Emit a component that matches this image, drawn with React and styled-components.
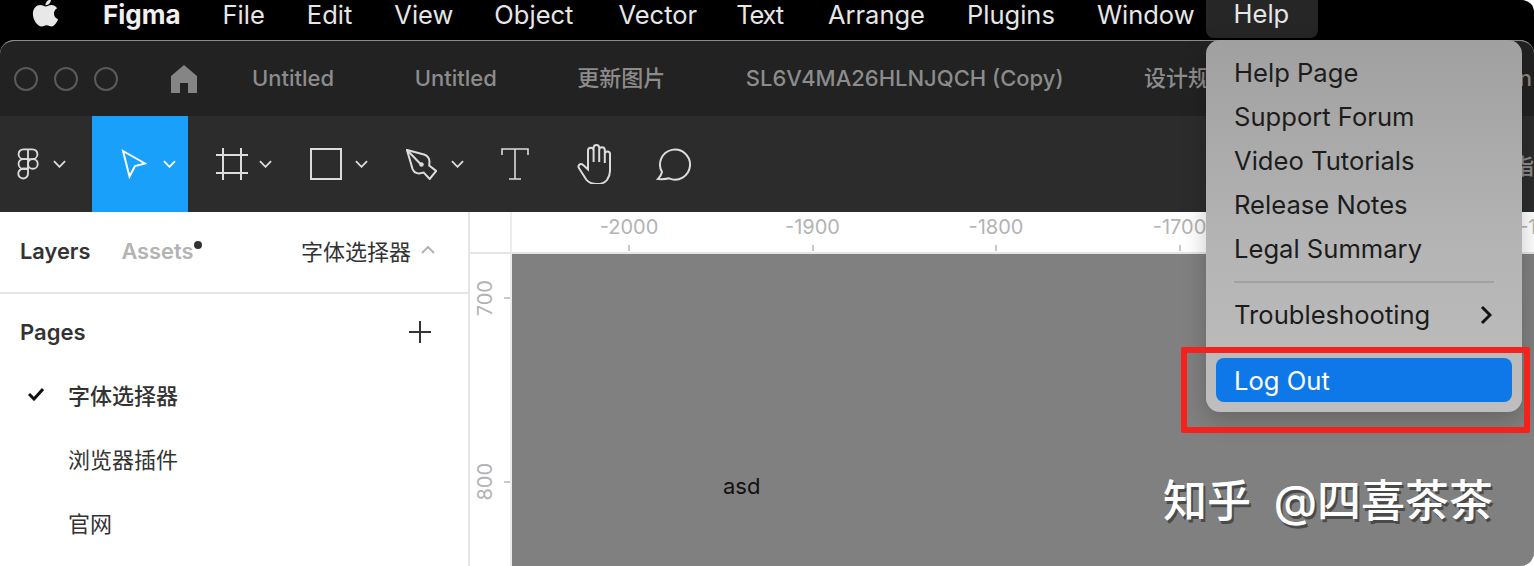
import React from "react";
import styled, { createGlobalStyle } from "styled-components";

const CJK = `"Inter", "Noto Sans CJK SC", sans-serif`;

const Global = createGlobalStyle`
  html, body { margin: 0; padding: 0; background: #fff; overflow: hidden; }
  body { font-family: ${CJK}; }
`;

const Screen = styled.div`
  position: relative;
  width: 1534px;
  height: 566px;
  overflow: hidden;
  background: #000;
  border-radius: 0 12px 14px 0;
  display: flex;
  flex-direction: column;
`;

const MenuBar = styled.div`
  height: 40px;
  flex: none;
  display: flex;
  align-items: center;
  padding-left: 32px;
  color: #ececec;
  font-size: 25.5px;
  line-height: 30px;
`;

const AppleMark = styled.svg`
  width: 27px;
  height: 30px;
  margin: -14px 44px 0 0;
  flex: none;
`;

const MenuName = styled.span`
  flex: none;
  margin-right: ${p => p.$gap ?? 42}px;
  margin-top: -10px;
  font-size: ${p => (p.$bold ? 26 : 25.5)}px;
  font-weight: ${p => (p.$bold ? 700 : 400)};
  letter-spacing: ${p => p.$track ?? 0}px;
  color: ${p => (p.$bold ? "#f0f0f0" : "#e6e6e6")};
`;

const HelpName = styled.span`
  flex: none;
  width: 112px;
  height: 38px;
  margin-bottom: 2px;
  padding-left: 28px;
  box-sizing: border-box;
  background: #262626;
  border-radius: 0 0 8px 8px;
  color: #e6e6e6;
  line-height: 28px;
`;

const Win = styled.div`
  flex: 1;
  display: flex;
  flex-direction: column;
  border-top: 1px solid #8c8c8c;
  border-radius: 14px 14px 0 0;
  overflow: hidden;
  background: #fff;
  min-height: 0;
`;

const TabBar = styled.div`
  height: 75px;
  flex: none;
  background: #222222;
  display: flex;
  align-items: center;
  padding-left: 14px;
  overflow: hidden;
  white-space: nowrap;
`;

const Lights = styled.div`
  display: flex;
  gap: 16px;
  margin-right: 53px;
  flex: none;
`;

const Light = styled.span`
  width: 24px;
  height: 24px;
  border: 2px solid #5a5a5a;
  box-sizing: border-box;
  border-radius: 50%;
`;

const HomeIcon = styled.svg`
  width: 26px;
  height: 28px;
  margin-right: 55px;
  flex: none;
`;

const Tab = styled.span`
  flex: none;
  margin-right: ${p => (p.$end ? 2 : 80.5)}px;
  margin-left: ${p => (p.$end ? "auto" : 0)};
  margin-top: ${p => (p.$cjk ? -6 : -2)}px;
  color: #8c8c8c;
  font-size: 22px;
  font-weight: 500;
`;

const Toolbar = styled.div`
  height: 96px;
  flex: none;
  background: #2c2c2c;
  display: flex;
  align-items: stretch;
  position: relative;
`;

const MainTool = styled.div`
  width: ${p => p.$width ?? 96}px;
  flex: none;
  display: flex;
  align-items: center;
  justify-content: flex-end;
  gap: ${p => p.$gap ?? 11}px;
  padding-right: ${p => p.$pad ?? 12}px;
  box-sizing: border-box;
  background: ${p => (p.$active ? "#18a0fb" : "transparent")};
  color: ${p => (p.$active ? "#ffffff" : "#dcdcdc")};
`;

const SimpleTool = styled.div`
  width: 80px;
  flex: none;
  display: flex;
  align-items: center;
  justify-content: center;
  color: #dcdcdc;
  margin-left: ${p => p.$shift ?? 0}px;
`;

const ToolbarEdge = styled.span`
  margin-left: auto;
  align-self: center;
  color: #8c8c8c;
  font-size: 22px;
  font-weight: 500;
`;

const Chevron = styled.svg`
  width: 13px;
  height: 8px;
  flex: none;
`;

const Body = styled.div`
  flex: 1;
  display: flex;
  min-height: 0;
`;

const Sidebar = styled.aside`
  width: 470px;
  flex: none;
  box-sizing: border-box;
  border-right: 2px solid #e5e5e5;
  background: #fff;
  display: flex;
  flex-direction: column;
`;

const SideTabs = styled.div`
  height: 82px;
  flex: none;
  box-sizing: border-box;
  border-bottom: 2px solid #e5e5e5;
  display: flex;
  align-items: center;
  padding: 0 33px 2px 20px;
  font-size: 21.8px;
  font-weight: 600;
`;

const SideTab = styled.span`
  color: ${p => (p.$muted ? "#b3b3b3" : "#333333")};
  margin-right: ${p => p.$gap ?? 0}px;
  position: relative;
`;

const Dot = styled.i`
  position: absolute;
  right: -9px;
  top: 3px;
  width: 8px;
  height: 8px;
  border-radius: 50%;
  background: #333;
`;

const PagePicker = styled.span`
  margin-left: auto;
  margin-top: -2px;
  display: flex;
  align-items: center;
  gap: 10px;
  color: #333;
  font-weight: 400;
  font-size: 22px;
`;

const PagesHead = styled.div`
  height: 68px;
  flex: none;
  box-sizing: border-box;
  display: flex;
  align-items: center;
  justify-content: space-between;
  padding: 8px 37px 0 20px;
  font-size: 22px;
  font-weight: 600;
  color: #333;
`;

const PageList = styled.div`
  display: flex;
  flex-direction: column;
`;

const PageRow = styled.div`
  height: 64px;
  flex: none;
  display: flex;
  align-items: center;
  padding-left: 28px;
  font-size: 22px;
  font-weight: ${p => (p.$active ? 500 : 400)};
  color: #333;
`;

const CheckSlot = styled.span`
  width: 40px;
  display: flex;
  flex: none;
`;

const Stage = styled.div`
  flex: 1;
  display: grid;
  grid-template-columns: 42px 1fr;
  grid-template-rows: 42px 1fr;
  min-width: 0;
`;

const Corner = styled.div`
  background: #fff;
  border-bottom: 2px solid #e5e5e5;
  border-right: 2px solid #ececec;
  box-sizing: border-box;
`;

const HRuler = styled.div`
  background: #fff;
  border-bottom: 2px solid #e5e5e5;
  box-sizing: border-box;
  display: flex;
  padding-left: 25.25px;
  overflow: hidden;
`;

const HMark = styled.div`
  width: 183.5px;
  flex: none;
  display: flex;
  flex-direction: column;
  align-items: center;
  justify-content: flex-end;
  color: #b3b3b3;
  font-size: 20px;
  line-height: 24px;
  gap: 6px;
  padding-bottom: 1px;
`;

const HTick = styled.i`
  width: 2px;
  height: 6px;
  background: #c8c8c8;
`;

const VRuler = styled.div`
  background: #fff;
  border-right: 2px solid #ececec;
  box-sizing: border-box;
  display: flex;
  flex-direction: column;
  overflow: hidden;
`;

const VMark = styled.div`
  height: 184px;
  flex: none;
  display: flex;
  align-items: center;
  justify-content: flex-end;
  gap: 7px;
  margin-top: ${p => (p.$first ? "-48px" : 0)};
  color: #b3b3b3;
  font-size: 20px;
`;

const VLabel = styled.span`
  writing-mode: vertical-rl;
  transform: rotate(180deg);
  line-height: 24px;
`;

const VTick = styled.i`
  width: 6px;
  height: 2px;
  background: #c8c8c8;
  flex: none;
`;

const Canvas = styled.div`
  background: #808080;
  padding: 217px 0 0 211px;
  font-size: 22px;
  line-height: 30px;
  color: #111;
`;

const HelpMenu = styled.div`
  position: absolute;
  left: 1206px;
  top: 40px;
  width: 316px;
  height: 372px;
  box-sizing: border-box;
  padding: 11px 10px 10px;
  border-radius: 14px;
  background: linear-gradient(180deg, #a0a0a0 0%, #b4b4b4 55%, #bebebe 100%);
  box-shadow: 0 8px 24px rgba(0, 0, 0, 0.22);
  display: flex;
  flex-direction: column;
  color: #1c1c1c;
  font-size: 25.6px;
`;

const HelpItem = styled.div`
  height: 44px;
  flex: none;
  box-sizing: border-box;
  display: flex;
  align-items: center;
  justify-content: space-between;
  padding: ${p => (p.$active ? 2 : 0)}px 20px 0 18px;
  border-radius: 8px;
  line-height: 30px;
  background: ${p => (p.$active ? "#0f78e8" : "transparent")};
  color: ${p => (p.$active ? "#ffffff" : "#1c1c1c")};
`;

const HelpRule = styled.div`
  height: 2px;
  flex: none;
  margin: ${p => p.$m};
  background: #a2a2a2;
`;

const RedMark = styled.div`
  position: absolute;
  left: 1181px;
  top: 347px;
  width: 349px;
  height: 86px;
  box-sizing: border-box;
  border: 6px solid #f5221b;
  border-radius: 2px;
  pointer-events: none;
`;

const Watermark = styled.div`
  position: absolute;
  left: 1163px;
  top: 471px;
  font-size: 44px;
  line-height: 60px;
  font-weight: 500;
  word-spacing: 11px;
  color: #ffffff;
  white-space: nowrap;
  text-shadow: 2px 3px 0 #4a4a4a;
`;

const Chev = () => (
  <Chevron viewBox="0 0 14 8" fill="none" stroke="currentColor" strokeWidth="2">
    <path d="M1 1l6 6 6-6" />
  </Chevron>
);

const stroke = { fill: "none", stroke: "currentColor", strokeWidth: 2 };

export default function App() {
  return (
    <>
      <Global />
      <Screen>
        <MenuBar>
          <AppleMark viewBox="0 0 30 32">
            <path
              fill="#e8e8e8"
              d="M21 1c.3 3-2.600 6.600-6 6.300C14.600 4 18 1 21 1zM15.300 8.900c1.500 0 3.300-1.700 6.300-1.700 2.300 0 4.700 1.100 6.300 3.400-5.300 3.200-4.400 10.300 1.100 12.400-1.500 3.500-4.300 8-7.100 8-2.200 0-3-1.400-5.600-1.400-2.700 0-3.500 1.400-5.600 1.400C6.700 31 1 24 1 17c0-6.500 4.200-9.800 8.200-9.800 2.700 0 4.800 1.700 6.100 1.700z"
            />
          </AppleMark>
          <MenuName $bold>Figma</MenuName>
          <MenuName>File</MenuName>
          <MenuName>Edit</MenuName>
          <MenuName $gap={41}>View</MenuName>
          <MenuName $gap={45}>Object</MenuName>
          <MenuName $gap={39}>Vector</MenuName>
          <MenuName $gap={45} $track={-1.2}>Text</MenuName>
          <MenuName>Arrange</MenuName>
          <MenuName>Plugins</MenuName>
          <MenuName $gap={11}>Window</MenuName>
          <HelpName>Help</HelpName>
        </MenuBar>
        <Win>
          <TabBar>
            <Lights>
              <Light />
              <Light />
              <Light />
            </Lights>
            <HomeIcon viewBox="0 0 26 28">
              <path fill="#858585" d="M13 0L0 11v17h9V18h8v10h9V11z" />
            </HomeIcon>
            <Tab>Untitled</Tab>
            <Tab>Untitled</Tab>
            <Tab $cjk>更新图片</Tab>
            <Tab>SL6V4MA26HLNJQCH (Copy)</Tab>
            <Tab $cjk>设计规范</Tab>
            <Tab $end>n</Tab>
          </TabBar>
          <Toolbar>
            <MainTool $width={92} $pad={26} $gap={14}>
              <svg width="22" height="32" viewBox="0 0 24 34" {...stroke}>
                <path d="M12 1H7a5 5 0 0 0 0 10.600h5zM12 1h5a5 5 0 0 1 0 10.600h-5z" />
                <path d="M12 11.600H7a5 5 0 0 0 0 10.600h5z" />
                <circle cx="17.300" cy="16.900" r="5.300" />
                <path d="M12 22.200H7a5.300 5.300 0 1 0 5 5.300z" />
              </svg>
              <Chev />
            </MainTool>
            <MainTool $active $gap={16}>
              <svg width="26" height="30" viewBox="0 0 26 30" {...stroke} strokeLinejoin="miter">
                <path d="M2 2l22 12.500-10 2.500-5.500 10.500z" />
              </svg>
              <Chev />
            </MainTool>
            <MainTool>
              <svg width="32" height="32" viewBox="0 0 32 32" {...stroke}>
                <path d="M7 0v32M25 0v32M0 7h32M0 25h32" />
              </svg>
              <Chev />
            </MainTool>
            <MainTool $gap={13}>
              <svg width="32" height="32" viewBox="0 0 32 32" {...stroke}>
                <rect x="1" y="1" width="30" height="30" />
              </svg>
              <Chev />
            </MainTool>
            <MainTool $gap={14}>
              <svg width="31" height="31" viewBox="0 0 31 31" {...stroke}>
                <path d="M1 1l17 4.500c3.500 1.200 5.500 3.800 5.500 7.500l-.3 3.500 7 5.500-6.500 8-6-6.500-3.500.8c-3.200.4-6.300-1.300-7.700-4.500z" />
                <path d="M1 1l13.500 14" />
                <circle cx="15.500" cy="15.500" r="2.200" fill="currentColor" stroke="none" />
              </svg>
              <Chev />
            </MainTool>
            <SimpleTool $shift={-1}>
              <svg width="28" height="32" viewBox="0 0 28 32" fill="none" stroke="currentColor" strokeWidth="1.600">
                <path d="M1 7V1h26v6M14 1v30M8 31h12" />
              </svg>
            </SimpleTool>
            <SimpleTool $shift={-1}>
              <svg width="36" height="40" viewBox="0 0 36 40" {...stroke}>
                <path d="M31 36c2-3 3-5 3-9V10a2.600 2.600 0 0 0-5.200 0v9V6a2.800 2.800 0 0 0-5.600 0v12V3.800a2.800 2.800 0 0 0-5.600 0V18V6.500a2.800 2.800 0 0 0-5.600 0v19l-4.800-4.500c-3-2.500-6 .5-4 3.500l7 11c3 4 6.500 4.500 10.500 4.500 5 0 8-1 10.300-4z" />
              </svg>
            </SimpleTool>
            <SimpleTool>
              <svg width="36" height="33" viewBox="0 0 36 33" {...stroke}>
                <path d="M2 31c2-2 3.500-4.800 4-7A15 15 0 1 1 13 30.300c-3.500 1-7 1-11 .7z" />
              </svg>
            </SimpleTool>
            <ToolbarEdge>指</ToolbarEdge>
          </Toolbar>
          <Body>
            <Sidebar>
              <SideTabs>
                <SideTab $gap={31}>Layers</SideTab>
                <SideTab $muted>
                  Assets
                  <Dot />
                </SideTab>
                <PagePicker>
                  字体选择器
                  <svg width="14" height="8" viewBox="0 0 14 8" fill="none" stroke="#b3b3b3" strokeWidth="2">
                    <path d="M1 7l6-6 6 6" />
                  </svg>
                </PagePicker>
              </SideTabs>
              <PagesHead>
                Pages
                <svg width="22" height="22" viewBox="0 0 22 22" stroke="#333" strokeWidth="2">
                  <path d="M11 0v22M0 11h22" />
                </svg>
              </PagesHead>
              <PageList>
                <PageRow $active>
                  <CheckSlot>
                    <svg width="16" height="14" viewBox="0 0 16 14" fill="none" stroke="#111" strokeWidth="3">
                      <path d="M1 7l5 5 9-10" />
                    </svg>
                  </CheckSlot>
                  字体选择器
                </PageRow>
                <PageRow>
                  <CheckSlot />
                  浏览器插件
                </PageRow>
                <PageRow>
                  <CheckSlot />
                  官网
                </PageRow>
              </PageList>
            </Sidebar>
            <Stage>
              <Corner />
              <HRuler>
                {["-2000", "-1900", "-1800", "-1700", "-1600", "-1500"].map(n => (
                  <HMark key={n}>
                    {n}
                    <HTick />
                  </HMark>
                ))}
              </HRuler>
              <VRuler>
                {["700", "800"].map((n, i) => (
                  <VMark key={n} $first={i === 0}>
                    <VLabel>{n}</VLabel>
                    <VTick />
                  </VMark>
                ))}
              </VRuler>
              <Canvas>asd</Canvas>
            </Stage>
          </Body>
        </Win>
        <HelpMenu>
          <HelpItem>Help Page</HelpItem>
          <HelpItem>Support Forum</HelpItem>
          <HelpItem>Video Tutorials</HelpItem>
          <HelpItem>Release Notes</HelpItem>
          <HelpItem>Legal Summary</HelpItem>
          <HelpRule $m="10px 18px 10px" />
          <HelpItem>
            Troubleshooting
            <svg width="12" height="20" viewBox="0 0 12 20" fill="none" stroke="#111" strokeWidth="3">
              <path d="M2 2l8 8-8 8" />
            </svg>
          </HelpItem>
          <HelpRule $m="10px 18px 9px" />
          <HelpItem $active>Log Out</HelpItem>
        </HelpMenu>
        <RedMark />
        <Watermark>知乎 @四喜茶茶</Watermark>
      </Screen>
    </>
  );
}
